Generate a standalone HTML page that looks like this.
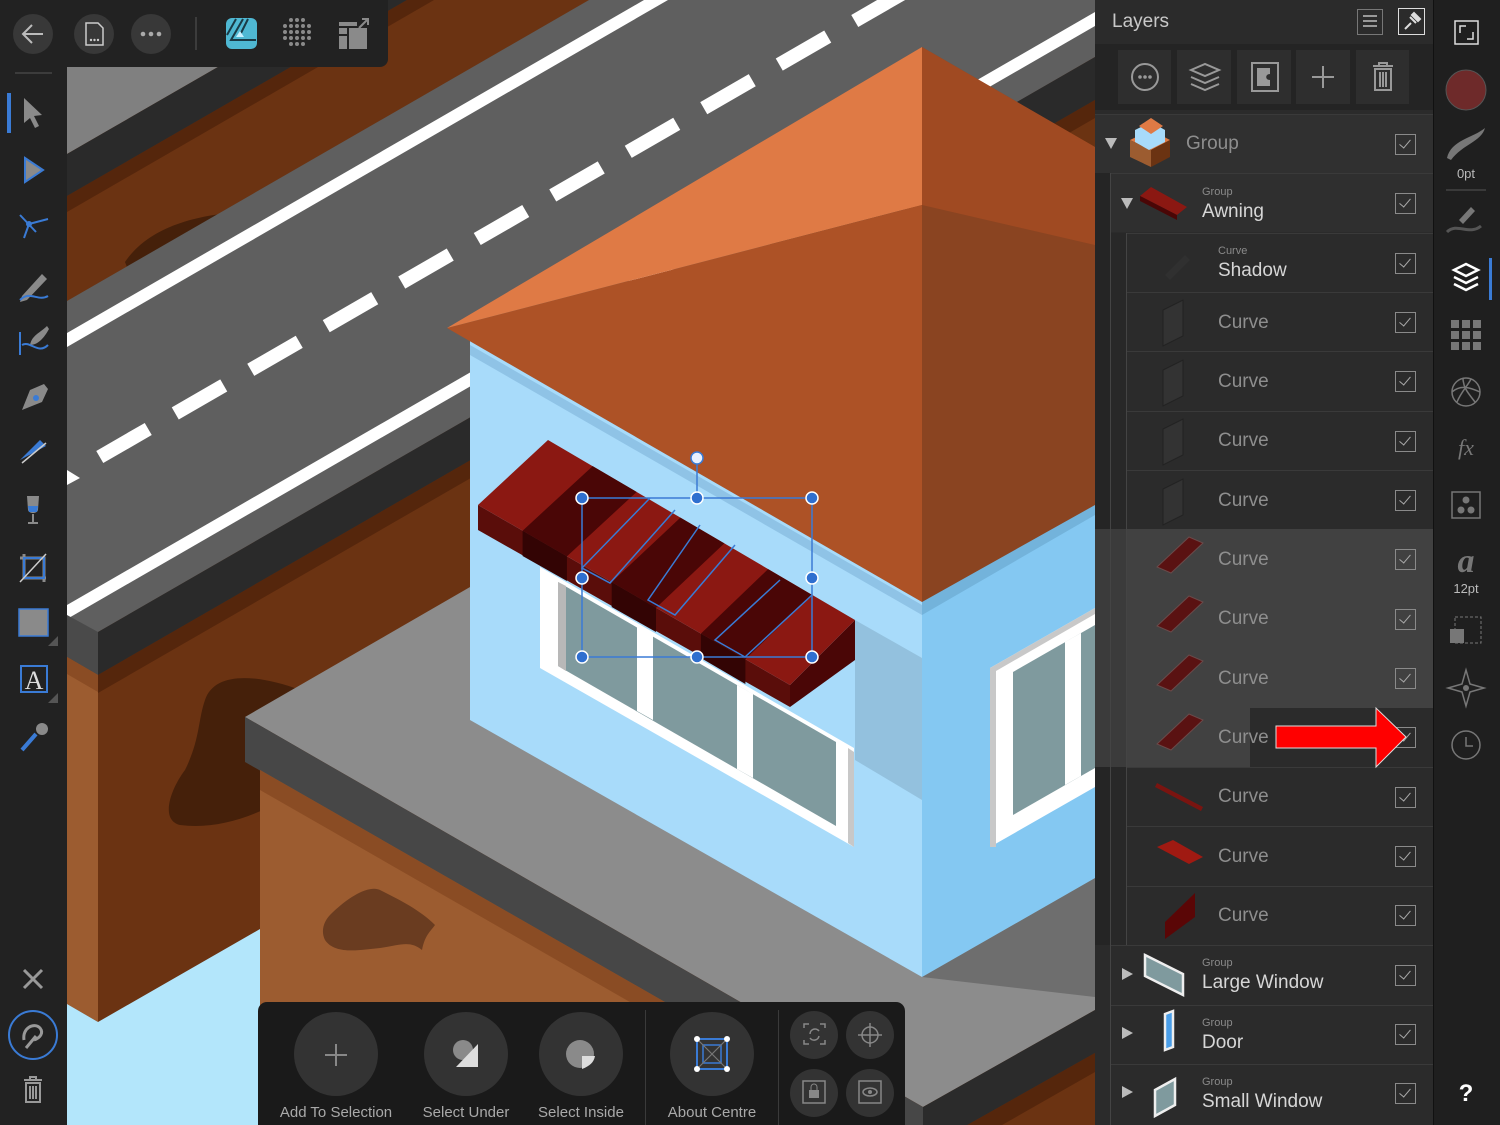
<!DOCTYPE html>
<html><head><meta charset="utf-8"><style>
*{margin:0;padding:0;box-sizing:border-box}
body{width:1500px;height:1125px;overflow:hidden;background:#222;font-family:"Liberation Sans",sans-serif;position:relative}
.abs{position:absolute}
.row{position:absolute;height:59px;border-top:1px solid #3a3a3a;background:#2b2b2b}
.nm{position:absolute;font-size:19px;color:#8e8e8e}
.nm.w{color:#d6d6d6}
.sm{position:absolute;font-size:11px;color:#8a8a8a}
.cb{position:absolute;left:1395px;width:21px;height:21px;border:1.5px solid #8a8a8a}
.cb:after{content:"";position:absolute;left:6px;top:2px;width:5px;height:10px;border-right:1.5px solid #aaa;border-bottom:1.5px solid #aaa;transform:rotate(40deg)}
.lbl{position:absolute;font-size:15px;color:#a9a9a9;text-align:center;width:150px}
.circ{position:absolute;border-radius:50%;background:#333}
</style></head><body>

<svg class="abs" style="left:0;top:0" width="1500" height="1125">
<defs><clipPath id="cv"><rect x="67" y="0" width="1028" height="1125"/></clipPath></defs>
<g clip-path="url(#cv)">
<rect x="67" y="0" width="1028" height="1125" fill="#6b3312"/>
<polygon points="67,0 334,0 67,154" fill="#808080"/>
<polygon points="67,154 334,0 407,0 67,196" fill="#2a2a2a"/>
<polygon points="67,196 407,0 434,0 67,212" fill="#55260c"/>
<path d="M125,262 C150,225 200,215 240,212 L130,275 Z" fill="#45200a"/>
<polygon points="67,301 589,0 1095,0 1095,57 67,650" fill="#5f5f5f"/>
<polygon points="67,333 644,0 668,0 67,347" fill="#fff"/>
<polygon points="67,605 1095,12 1095,26 67,619" fill="#fff"/>
<polygon points="67,470 80,478 67,485" fill="#fff"/>
<g fill="#fff" transform="translate(124,443)">
<g id="d"><rect x="-28" y="-7" width="56" height="14" transform="rotate(-30)"/></g>
<use href="#d" x="75.5" y="-43.6"/><use href="#d" x="151" y="-87.2"/><use href="#d" x="226.5" y="-130.8"/>
<use href="#d" x="302" y="-174.4"/><use href="#d" x="377.5" y="-218"/><use href="#d" x="453" y="-261.6"/>
<use href="#d" x="528.5" y="-305.2"/><use href="#d" x="604" y="-348.8"/><use href="#d" x="679.5" y="-392.4"/>
<use href="#d" x="755" y="-436"/><use href="#d" x="830.5" y="-479.6"/>
</g>
<polygon points="98,632 1095,57 1095,100 98,675" fill="#2a2a2a"/>
<polygon points="67,615 98,632 98,675 67,657" fill="#4a4a4a"/>
<polygon points="98,675 1095,100 1095,118 98,693" fill="#55260c"/>
<polygon points="67,657 98,675 98,1022 67,1004" fill="#9c5c30"/>
<polygon points="67,657 98,675 98,692 67,674" fill="#8a4c24"/>
<path d="M205,700 C215,670 260,675 300,690 L300,790 C260,815 220,830 180,825 C160,820 170,790 185,770 C200,740 198,720 205,700 Z" fill="#45200a"/>
<polygon points="67,1004 98,1022 260,929 260,1125 67,1125" fill="#b3e6fb"/>
<polygon points="245,717 1095,226 1095,1010 923,1107" fill="#8c8c8c"/>
<polygon points="922,977 1095,878 1095,997" fill="#6e6e6e"/>
<polygon points="923,1107 1095,1010 1095,1053 923,1150" fill="#2b2b2b"/>
<polygon points="923,1150 1095,1053 1095,1072 923,1170" fill="#55260c"/>
<polygon points="245,717 923,1107 923,1150 245,762" fill="#474747"/>
<polygon points="260,770 923,1150 923,1125 260,1125" fill="#9c5c30"/>
<polygon points="260,770 923,1150 923,1170 260,790" fill="#8a4c24"/>
<path d="M330,915 C350,895 370,885 380,890 C400,900 420,910 435,925 C430,932 425,935 422,950 C410,940 400,945 380,948 C360,950 335,955 325,940 C320,930 325,920 330,915 Z" fill="#6a3c20"/>
<polygon points="470,335 922,595 922,977 470,720" fill="#a8dbfa"/>
<polygon points="922,600 1095,500 1095,878 922,977" fill="#84c8f2"/>
<polygon points="922,600 1095,500 1095,515 922,615" fill="#73b3db"/>
<polygon points="470,345 922,605 922,615 470,355" fill="#8fc3e6"/>
<polygon points="855,620 922,658 922,800 855,760" fill="rgba(40,60,80,0.16)"/>
<polygon points="447,328 922,205 922,602" fill="#ad5226"/>
<polygon points="447,328 922,47 922,205" fill="#df7a45"/>
<polygon points="922,47 1095,147 1095,505 922,602" fill="#8a4421"/>
<polygon points="922,47 1095,147 1095,245 922,205" fill="#a04a22"/>
<polygon points="540,567 854,748 854,847 540,668" fill="#fff"/>
<polygon points="848,748 854,752 854,847 848,843" fill="#c8c8c8"/>
<polygon points="558,582 836,742 836,826 558,666" fill="#7f9a9e"/>
<polygon points="558,582 566,586 566,671 558,666" fill="#b8b8b8"/>
<polygon points="637,627 653,636 653,720 637,711" fill="#fff"/>
<polygon points="737,685 753,694 753,778 737,769" fill="#fff"/>
<polygon points="990,668 1095,608 1095,787 990,847" fill="#fff"/>
<polygon points="990,668 1095,608 1095,614 996,671 996,847 990,847" fill="#c8c8c8"/>
<polygon points="1013,672 1095,625 1095,768 1013,815" fill="#7f9a9e"/>
<polygon points="1065,642 1081,633 1081,776 1065,785" fill="#fff"/>
<polygon points="478,505 790,685 790,707 478,530" fill="#5a0d0a"/>
<polygon points="790,685 855,620 855,660 790,707" fill="#4a0606"/>
<polygon points="478,505 548,440 855,620 790,685" fill="#8b1812"/>
<g fill="#4a0606">
<polygon points="522.6,530.7 592.7,466.1 636.6,491.9 566.9,556.4"/>
<polygon points="611.7,582.1 680.4,517.6 724.3,543.4 656.0,607.9"/>
<polygon points="700.9,633.6 768.1,569.1 811.9,594.9 745.4,659.3"/>
</g>
<g fill="#330404">
<polygon points="522.6,530.7 566.9,556.4 566.9,581 522.6,556"/>
<polygon points="611.7,582.1 656,607.9 656,632 611.7,607"/>
<polygon points="700.9,633.6 745.4,659.3 745.4,684 700.9,658"/>
</g>
<g stroke="#3a7bd5" stroke-width="1.5" fill="none">
<rect x="582" y="498" width="230" height="159"/>
<line x1="697" y1="458" x2="697" y2="498"/>
<polyline points="650,498 582,568 610,583 675,510"/>
<polyline points="700,525 648,600 675,615 735,545"/>
<polyline points="780,580 715,640 745,657 812,595"/>
</g>
<g fill="#2f6fcf" stroke="#fff" stroke-width="1.5">
<circle cx="582" cy="498" r="6"/><circle cx="697" cy="498" r="6"/><circle cx="812" cy="498" r="6"/>
<circle cx="582" cy="578" r="6"/><circle cx="812" cy="578" r="6"/>
<circle cx="582" cy="657" r="6"/><circle cx="697" cy="657" r="6"/><circle cx="812" cy="657" r="6"/>
<circle cx="697" cy="458" r="6" fill="#e8f0ff" stroke="#3a7bd5"/>
</g>
</g>
</svg>

<div class="abs" style="left:0;top:0;width:388px;height:67px;background:#222;border-bottom-right-radius:8px"></div>
<svg class="abs" style="left:0;top:0" width="388" height="67">
<circle cx="33" cy="34" r="20" fill="#383838"/>
<path d="M43,34 H24 M32,25 L23,34 L32,43" stroke="#bbb" stroke-width="2" fill="none"/>
<circle cx="94" cy="34" r="20" fill="#383838"/>
<path d="M86,23 H98 L103,28 V45 H86 Z" stroke="#ccc" stroke-width="1.5" fill="none"/>
<g fill="#ccc"><circle cx="91" cy="40" r="1.2"/><circle cx="94.5" cy="40" r="1.2"/><circle cx="98" cy="40" r="1.2"/></g>
<circle cx="151" cy="34" r="20" fill="#383838"/>
<g fill="#aaa"><circle cx="143" cy="34" r="2.3"/><circle cx="151" cy="34" r="2.3"/><circle cx="159" cy="34" r="2.3"/></g>
<line x1="196" y1="17" x2="196" y2="50" stroke="#444" stroke-width="1.5"/>
<rect x="226" y="18" width="31" height="31" rx="6" fill="#4fb8d3"/>
<path d="M236,19 L227,35 M243,19 L231,40 L256,40 M241,33 L248,19" stroke="#1a3a46" stroke-width="2" fill="none"/>
<path d="M240,31 L244,37 L236,37Z" fill="#c8f0ff"/>
<g fill="#8a8a8a">
<circle cx="291" cy="20" r="2"/><circle cx="297" cy="20" r="2"/><circle cx="303" cy="20" r="2"/>
<circle cx="285" cy="26" r="2"/><circle cx="291" cy="26" r="2"/><circle cx="297" cy="26" r="2"/><circle cx="303" cy="26" r="2"/><circle cx="309" cy="26" r="2"/>
<circle cx="285" cy="32" r="2"/><circle cx="291" cy="32" r="2"/><circle cx="297" cy="32" r="2"/><circle cx="303" cy="32" r="2"/><circle cx="309" cy="32" r="2"/>
<circle cx="285" cy="38" r="2"/><circle cx="291" cy="38" r="2"/><circle cx="297" cy="38" r="2"/><circle cx="303" cy="38" r="2"/><circle cx="309" cy="38" r="2"/>
<circle cx="291" cy="44" r="2"/><circle cx="297" cy="44" r="2"/><circle cx="303" cy="44" r="2"/>
<rect x="339" y="22" width="18" height="4"/><rect x="339" y="28" width="8" height="6"/><rect x="349" y="28" width="18" height="21"/><rect x="339" y="36" width="8" height="13"/>
</g>
<path d="M359,28 L368,19 M362,19 H368 V25" stroke="#8a8a8a" stroke-width="2" fill="none"/>
</svg>

<div class="abs" style="left:0;top:67px;width:67px;height:1058px;background:#222"></div>
<svg class="abs" style="left:0;top:0" width="67" height="1125">
<line x1="15" y1="73" x2="52" y2="73" stroke="#444" stroke-width="1.5"/>
<rect x="7" y="93" width="4" height="40" fill="#3a7bd5"/>
<path d="M24,98 L42,115 L34,116 L39,126 L35,128 L30,118 L24,123Z" fill="#8a8a8a"/>
<path d="M25,158 L43,170 L25,182Z" fill="#8a8a8a" stroke="#3a7bd5" stroke-width="2"/>
<g stroke="#3a7bd5" stroke-width="2"><line x1="20" y1="215" x2="36" y2="232"/><line x1="29" y1="224" x2="48" y2="219"/><line x1="29" y1="224" x2="24" y2="238"/></g>
<circle cx="29" cy="224" r="3" fill="#3a7bd5"/>
<path d="M22,296 L42,274 L47,279 L27,300 L20,302Z" fill="#8a8a8a"/><path d="M20,300 C30,290 38,302 48,296" stroke="#3a7bd5" stroke-width="2" fill="none"/>
<path d="M30,345 C32,335 40,333 47,326 L49,329 C44,338 38,345 30,345Z" fill="#8a8a8a"/><path d="M22,345 C30,340 38,355 48,345 M20,332 V355" stroke="#3a7bd5" stroke-width="2" fill="none"/>
<path d="M22,410 L30,390 L44,384 L48,389 L42,402 Z" fill="#8a8a8a"/><circle cx="36" cy="398" r="3" fill="#3a7bd5"/>
<path d="M20,460 L46,446 L40,440 Z" fill="#3a7bd5"/><line x1="22" y1="463" x2="46" y2="443" stroke="#ccc" stroke-width="1.5"/>
<path d="M27,496 H39 L38,510 C37,514 29,514 28,510Z" fill="#8a8a8a"/><path d="M28,506 H38 L37,512 H29Z" fill="#3a7bd5"/><path d="M33,514 V522 M28,523 H38" stroke="#8a8a8a" stroke-width="2"/>
<path d="M24,554 V578 H46 M20,558 H44 V582" stroke="#8a8a8a" stroke-width="3" fill="none"/><rect x="24" y="558" width="20" height="20" fill="none" stroke="#3a7bd5" stroke-width="2"/><line x1="20" y1="582" x2="46" y2="554" stroke="#ccc" stroke-width="1.5"/>
<rect x="19" y="609" width="29" height="27" fill="#8a8a8a" stroke="#3a7bd5" stroke-width="1.5"/><path d="M48,646 L58,636 V646Z" fill="#555"/>
<rect x="21" y="666" width="26" height="26" fill="none" stroke="#3a7bd5" stroke-width="2"/>
<text x="34" y="689" font-family="Liberation Serif" font-size="26" fill="#ddd" text-anchor="middle">A</text><path d="M48,703 L58,693 V703Z" fill="#555"/>
<path d="M22,750 L36,734" stroke="#3a7bd5" stroke-width="4"/><circle cx="42" cy="729" r="6" fill="#8a8a8a"/>
<path d="M24,970 L42,988 M42,970 L24,988" stroke="#999" stroke-width="3"/>
<circle cx="33" cy="1035" r="24" fill="none" stroke="#3a7bd5" stroke-width="2"/>
<path d="M24,1040 C22,1028 34,1022 40,1028 C44,1033 40,1038 34,1040 M26,1048 L36,1036" stroke="#999" stroke-width="3" fill="none"/>
<path d="M24,1080 H42 M30,1080 V1077 H36 V1080 M26,1083 H40 V1102 H26Z M30,1086 V1099 M33,1086 V1099 M36,1086 V1099" stroke="#999" stroke-width="2" fill="none"/>
</svg>

<div class="abs" style="left:258px;top:1002px;width:647px;height:123px;background:#1a1a1a;border-radius:9px 9px 0 0"></div>
<div class="circ" style="left:294px;top:1012px;width:84px;height:84px"></div>
<div class="circ" style="left:424px;top:1012px;width:84px;height:84px"></div>
<div class="circ" style="left:539px;top:1012px;width:84px;height:84px"></div>
<div class="circ" style="left:670px;top:1012px;width:84px;height:84px"></div>
<div class="circ" style="left:790px;top:1011px;width:48px;height:48px"></div>
<div class="circ" style="left:846px;top:1011px;width:48px;height:48px"></div>
<div class="circ" style="left:790px;top:1069px;width:48px;height:48px"></div>
<div class="circ" style="left:846px;top:1069px;width:48px;height:48px"></div>
<div class="abs" style="left:645px;top:1010px;width:1px;height:115px;background:#3a3a3a"></div>
<div class="abs" style="left:778px;top:1010px;width:1px;height:115px;background:#3a3a3a"></div>
<svg class="abs" style="left:0;top:0" width="1500" height="1125" pointer-events="none">
<path d="M336,1044 V1066 M325,1055 H347" stroke="#888" stroke-width="2"/>
<circle cx="463" cy="1050" r="10" fill="#8a8a8a"/><path d="M478,1044 V1067 H456Z" fill="#ddd"/>
<circle cx="580" cy="1054" r="14" fill="#8a8a8a"/><path d="M582,1056 H595 C594,1062 590,1066 582,1069Z" fill="#ddd"/>
<rect x="697" y="1039" width="30" height="30" fill="none" stroke="#3a7bd5" stroke-width="2"/>
<rect x="703" y="1045" width="18" height="18" fill="none" stroke="#3a7bd5" stroke-width="1.5"/>
<path d="M699,1041 L725,1067 M725,1041 L699,1067" stroke="#777" stroke-width="1.2"/>
<g fill="#fff"><circle cx="697" cy="1039" r="3"/><circle cx="727" cy="1039" r="3"/><circle cx="697" cy="1069" r="3"/><circle cx="727" cy="1069" r="3"/></g>
<path d="M804,1028 V1024 H809 M820,1024 H825 V1028 M825,1040 V1044 H820 M809,1044 H804 V1040" stroke="#888" stroke-width="1.5" fill="none"/>
<path d="M810,1034 A5,5 0 0 1 819,1031 M819,1036 A5,5 0 0 1 810,1038" stroke="#888" stroke-width="1.5" fill="none"/>
<circle cx="870" cy="1035" r="8" fill="none" stroke="#888" stroke-width="1.5"/><path d="M870,1023 V1047 M858,1035 H882" stroke="#888" stroke-width="1.5"/>
<rect x="803" y="1081" width="22" height="22" fill="none" stroke="#888" stroke-width="1.5"/><rect x="809" y="1090" width="10" height="8" fill="#888"/><path d="M811,1090 V1087 A3,3 0 0 1 817,1087 V1090" stroke="#888" fill="none"/>
<rect x="859" y="1081" width="22" height="22" fill="none" stroke="#888" stroke-width="1.5"/><ellipse cx="870" cy="1092" rx="7" ry="4" fill="none" stroke="#888" stroke-width="1.5"/><circle cx="870" cy="1092" r="2" fill="#888"/>
</svg>
<div class="lbl" style="left:261px;top:1104px">Add To Selection</div>
<div class="lbl" style="left:391px;top:1104px">Select Under</div>
<div class="lbl" style="left:506px;top:1104px">Select Inside</div>
<div class="lbl" style="left:637px;top:1104px">About Centre</div>

<div class="abs" style="left:1095px;top:0;width:338px;height:1125px;background:#2b2b2b"></div>
<div class="abs" style="left:1112px;top:11px;font-size:19px;color:#c8c8c8">Layers</div>
<div class="abs" style="left:1357px;top:9px;width:26px;height:26px;border:1.5px solid #777"></div>
<div class="abs" style="left:1363px;top:15px;width:14px;height:2px;background:#999;box-shadow:0 5px 0 #999,0 10px 0 #999"></div>
<div class="abs" style="left:1398px;top:8px;width:27px;height:27px;border:1.5px solid #ddd"></div>
<svg class="abs" style="left:1398px;top:8px" width="27" height="27"><path d="M7,21 L13,15 M12,9 L18,15 M14,7 L20,13 L22,11 L16,5Z" stroke="#ddd" stroke-width="2" fill="#ddd"/></svg>
<div class="abs" style="left:1095px;top:44px;width:338px;height:66px;background:#242424"></div>
<div class="abs" style="left:1118px;top:50px;width:53px;height:54px;background:#2e2e2e"></div>
<div class="abs" style="left:1177px;top:50px;width:54px;height:54px;background:#2e2e2e"></div>
<div class="abs" style="left:1237px;top:50px;width:54px;height:54px;background:#2e2e2e"></div>
<div class="abs" style="left:1296px;top:50px;width:54px;height:54px;background:#2e2e2e"></div>
<div class="abs" style="left:1356px;top:50px;width:53px;height:54px;background:#2e2e2e"></div>
<svg class="abs" style="left:1095px;top:44px" width="338" height="66">
<circle cx="50" cy="33" r="13" fill="none" stroke="#999" stroke-width="2"/><g fill="#999"><circle cx="45" cy="33" r="1.8"/><circle cx="50" cy="33" r="1.8"/><circle cx="55" cy="33" r="1.8"/></g>
<path d="M96,26 L110,20 L124,26 L110,32Z M96,33 L110,39 L124,33 M96,40 L110,46 L124,40" stroke="#999" stroke-width="2" fill="none"/>
<rect x="157" y="19" width="26" height="28" fill="none" stroke="#999" stroke-width="2"/><path d="M162,24 H175 V30 C170,30 170,36 175,36 V42 H162Z" fill="#999"/>
<path d="M228,22 V44 M217,33 H239" stroke="#999" stroke-width="2"/>
<path d="M278,22 H298 M284,22 V19 H292 V22 M280,25 H296 V46 H280Z M285,28 V43 M288,28 V43 M291,28 V43" stroke="#999" stroke-width="2" fill="none"/>
</svg>

<div class="row" style="left:1095px;top:114px;width:338px;background:#303030"></div>
<div class="row" style="left:1111px;top:173px;width:322px;background:#2f2f2f"></div>
<div class="row" style="left:1127px;top:233px;width:306px"></div>
<div class="row" style="left:1127px;top:292px;width:306px"></div>
<div class="row" style="left:1127px;top:351px;width:306px"></div>
<div class="row" style="left:1127px;top:411px;width:306px"></div>
<div class="row" style="left:1127px;top:470px;width:306px"></div>
<div class="abs" style="left:1095px;top:529px;width:338px;height:238px;background:#414141"></div>
<div class="abs" style="left:1250px;top:708px;width:183px;height:59px;background:#2b2b2b"></div>
<div class="row" style="left:1127px;top:767px;width:306px"></div>
<div class="row" style="left:1127px;top:826px;width:306px"></div>
<div class="row" style="left:1127px;top:886px;width:306px"></div>
<div class="row" style="left:1111px;top:945px;width:322px"></div>
<div class="row" style="left:1111px;top:1005px;width:322px"></div>
<div class="row" style="left:1111px;top:1064px;width:322px"></div>
<div class="abs" style="left:1095px;top:173px;width:16px;height:772px;background:#252525"></div>
<div class="abs" style="left:1111px;top:233px;width:16px;height:712px;background:#282828"></div>
<div class="abs" style="left:1095px;top:529px;width:32px;height:238px;background:#3b3b3b"></div>
<div class="abs" style="left:1110px;top:173px;width:1px;height:952px;background:#444"></div>
<div class="abs" style="left:1126px;top:233px;width:1px;height:712px;background:#444"></div>

<svg class="abs" style="left:1095px;top:0" width="338" height="1125">
<path d="M10,138 L22,138 L16,149Z" fill="#bbb"/>
<path d="M26,198 L38,198 L32,209Z" fill="#bbb"/>
<path d="M27,968 L38,974 L27,980Z" fill="#bbb"/><path d="M27,1027 L38,1033 L27,1039Z" fill="#bbb"/><path d="M27,1086 L38,1092 L27,1098Z" fill="#bbb"/>
<polygon points="35,140 56,130 75,140 56,150" fill="#e07b45"/><polygon points="35,140 56,150 56,167 35,157" fill="#9c5c30"/><polygon points="56,150 75,140 75,157 56,167" fill="#6b3312"/>
<polygon points="40,130 56,122 70,130 70,142 54,150 40,142" fill="#a8dbfa"/><polygon points="44,126 56,118 68,126 56,134" fill="#df7a45"/>
<polygon points="45,196 56,187 92,207 82,215" fill="#8b1812"/><polygon points="45,196 82,215 82,220 45,201" fill="#4a0606"/>
<polygon points="70,275 90,255 95,260 75,280" fill="#303030"/>
<g fill="#333" stroke="#222"><polygon points="68,310 88,300 88,336 68,346"/><polygon points="68,370 88,360 88,396 68,406"/><polygon points="68,429 88,419 88,455 68,465"/><polygon points="68,489 88,479 88,515 68,525"/></g>
<g fill="#5a1212" stroke="#6a4a4a" stroke-width="1"><polygon points="62,567 94,537 108,543 76,573"/><polygon points="62,626 94,596 108,602 76,632"/><polygon points="62,685 94,655 108,661 76,691"/><polygon points="62,744 94,714 108,720 76,750"/></g>
<polygon points="62,783 108,807 106,811 60,787" fill="#7a1410"/>
<polygon points="62,847 78,840 108,857 94,864" fill="#a01a12"/>
<polygon points="70,922 100,893 100,917 70,939" fill="#5a0606"/>
<g fill="#7f9a9e" stroke="#eee" stroke-width="2.5"><polygon points="50,955 88,974 88,995 50,976"/><polygon points="70,1014 78,1011 78,1047 70,1050" fill="#4a9ee8"/><polygon points="60,1090 80,1079 80,1105 60,1116"/></g>
</svg>

<div class="nm" style="left:1186px;top:133px">Group</div>
<div class="sm" style="left:1202px;top:186px">Group</div><div class="nm w" style="left:1202px;top:201px">Awning</div>
<div class="sm" style="left:1218px;top:245px">Curve</div><div class="nm w" style="left:1218px;top:260px">Shadow</div>
<div class="nm" style="left:1218px;top:312px">Curve</div>
<div class="nm" style="left:1218px;top:371px">Curve</div>
<div class="nm" style="left:1218px;top:430px">Curve</div>
<div class="nm" style="left:1218px;top:490px">Curve</div>
<div class="nm" style="left:1218px;top:549px">Curve</div>
<div class="nm" style="left:1218px;top:608px">Curve</div>
<div class="nm" style="left:1218px;top:668px">Curve</div>
<div class="nm" style="left:1218px;top:727px">Curve</div>
<div class="nm" style="left:1218px;top:786px">Curve</div>
<div class="nm" style="left:1218px;top:846px">Curve</div>
<div class="nm" style="left:1218px;top:905px">Curve</div>
<div class="sm" style="left:1202px;top:957px">Group</div><div class="nm w" style="left:1202px;top:972px">Large Window</div>
<div class="sm" style="left:1202px;top:1017px">Group</div><div class="nm w" style="left:1202px;top:1032px">Door</div>
<div class="sm" style="left:1202px;top:1076px">Group</div><div class="nm w" style="left:1202px;top:1091px">Small Window</div>

<div class="cb" style="top:134px"></div><div class="cb" style="top:193px"></div><div class="cb" style="top:253px"></div>
<div class="cb" style="top:312px"></div><div class="cb" style="top:371px"></div><div class="cb" style="top:431px"></div>
<div class="cb" style="top:490px"></div><div class="cb" style="top:549px"></div><div class="cb" style="top:609px"></div>
<div class="cb" style="top:668px"></div><div class="cb" style="top:727px"></div><div class="cb" style="top:787px"></div>
<div class="cb" style="top:846px"></div><div class="cb" style="top:905px"></div><div class="cb" style="top:965px"></div>
<div class="cb" style="top:1024px"></div><div class="cb" style="top:1083px"></div>

<svg class="abs" style="left:1270px;top:705px" width="145" height="66"><polygon points="6,21 106,21 106,3 136,32 106,62 106,43 6,43" fill="#f00" stroke="#ddd" stroke-width="1"/></svg>

<div class="abs" style="left:1433px;top:0;width:67px;height:1125px;background:#1f1f1f;border-left:1px solid #111"></div>
<svg class="abs" style="left:1433px;top:0" width="67" height="1125">
<rect x="22" y="21" width="23" height="23" fill="none" stroke="#ddd" stroke-width="1.5"/><path d="M27,33 V26 H33 M40,32 V39 H34" stroke="#ddd" stroke-width="1.5" fill="none"/>
<circle cx="33" cy="90" r="20" fill="#6e2a2a" stroke="#555"/>
<path d="M14,158 C18,140 40,138 52,128 C48,142 30,144 18,160Z" fill="#777"/>
<text x="33" y="178" font-size="13" fill="#bbb" text-anchor="middle">0pt</text>
<line x1="13" y1="190" x2="53" y2="190" stroke="#444" stroke-width="1.5"/>
<path d="M26,220 L38,207 L42,211 L30,224Z" fill="#777"/><path d="M14,232 C24,222 36,236 48,226" stroke="#555" stroke-width="3" fill="none"/>
<rect x="56" y="258" width="3" height="42" fill="#3a7bd5"/>
<path d="M21,270 L33,264 L45,270 L33,276Z M21,277 L33,283 L45,277 M21,284 L33,290 L45,284" stroke="#fff" stroke-width="2.5" fill="none"/>
<g fill="#777"><rect x="18" y="320" width="8" height="8"/><rect x="29" y="320" width="8" height="8"/><rect x="40" y="320" width="8" height="8"/><rect x="18" y="331" width="8" height="8"/><rect x="29" y="331" width="8" height="8"/><rect x="40" y="331" width="8" height="8"/><rect x="18" y="342" width="8" height="8"/><rect x="29" y="342" width="8" height="8"/><rect x="40" y="342" width="8" height="8"/></g>
<circle cx="33" cy="392" r="14" fill="none" stroke="#777" stroke-width="1.5"/><path d="M19,392 C28,384 38,388 47,392 M24,402 C28,392 36,384 38,379 M42,402 C36,394 30,388 30,378" stroke="#777" stroke-width="1.5" fill="none"/>
<text x="33" y="455" font-family="Liberation Serif" font-style="italic" font-size="22" fill="#777" text-anchor="middle">fx</text>
<rect x="19" y="492" width="28" height="26" fill="none" stroke="#777" stroke-width="1.5"/><g fill="#777"><circle cx="33" cy="500" r="3.5"/><circle cx="28" cy="510" r="3.5"/><circle cx="38" cy="510" r="3.5"/></g>
<text x="33" y="572" font-family="Liberation Serif" font-style="italic" font-weight="bold" font-size="34" fill="#777" text-anchor="middle">a</text>
<text x="33" y="593" font-size="13" fill="#bbb" text-anchor="middle">12pt</text>
<rect x="22" y="617" width="26" height="26" fill="none" stroke="#777" stroke-dasharray="3,2"/><rect x="17" y="629" width="14" height="14" fill="#777"/>
<path d="M33,670 L37,684 L51,688 L37,692 L33,706 L29,692 L15,688 L29,684Z" fill="none" stroke="#777" stroke-width="1.5"/><circle cx="33" cy="688" r="3" fill="#777"/>
<circle cx="33" cy="745" r="14" fill="none" stroke="#777" stroke-width="1.5"/><path d="M33,737 V746 H40" stroke="#777" stroke-width="1.5" fill="none"/>
<text x="33" y="1101" font-size="24" font-weight="bold" fill="#fff" text-anchor="middle">?</text>
</svg>
</body></html>
